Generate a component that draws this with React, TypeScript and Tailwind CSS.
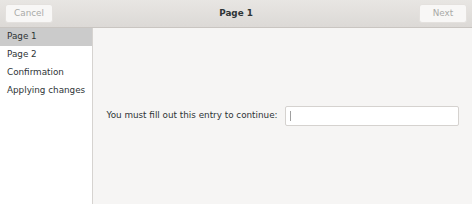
import React, { useState } from 'react';

const steps = ['Page 1', 'Page 2', 'Confirmation', 'Applying changes'];

const App: React.FC = () => {
  const [value, setValue] = useState('');
  const current = 0;

  return (
    <div
      className="w-[474px] h-[207px] bg-white text-[#2e3436]"
      style={{ fontFamily: '"DejaVu Sans", sans-serif' }}
    >
      <div className="w-[472px] h-[204px] flex flex-col">
        {/* Header bar */}
        <div className="h-[28px] flex items-center justify-between px-[5px] bg-gradient-to-b from-[#e8e6e3] to-[#dcd9d6] border-b border-[#c9c5c1]">
          <button className="w-[48px] h-[19px] rounded-[3px] bg-[#f8f7f6] border border-[#e4e1de] text-[8.8px] text-[#a9aaa7]">
            Cancel
          </button>
          <span className="text-[8.8px] font-bold text-[#2e3436]">Page 1</span>
          <button className="w-[48px] h-[19px] rounded-[3px] bg-[#f8f7f6] border border-[#e4e1de] text-[8.8px] text-[#a9aaa7]">
            Next
          </button>
        </div>

        <div className="flex flex-1">
          {/* Sidebar */}
          <div className="w-[93px] bg-white border-r border-[#d6d3d0] flex flex-col">
            {steps.map((s, i) => (
              <div
                key={s}
                className={`h-[18px] flex items-center pl-[7px] text-[8.8px] ${
                  i === current ? 'bg-[#cbcbcb]' : ''
                }`}
              >
                {s}
              </div>
            ))}
          </div>

          {/* Content */}
          <div className="flex-1 bg-[#f6f5f4] flex items-center justify-center gap-[7px]">
            <span className="text-[8.8px] text-[#2e3436]">You must fill out this entry to continue:</span>
            <div className="relative">
              <input
                value={value}
                onChange={(e) => setValue(e.target.value)}
                className="w-[174px] h-[20px] bg-white border border-[#d5d2cf] rounded-[2px] px-[5px] text-[8.8px] outline-none caret-[#9a9a9a] block"
              />
              {value === '' && (
                <span className="absolute left-[5px] top-[5px] w-[1px] h-[10px] bg-[#a0a0a0] pointer-events-none" />
              )}
            </div>
          </div>
        </div>
      </div>
    </div>
  );
};

export default App;
